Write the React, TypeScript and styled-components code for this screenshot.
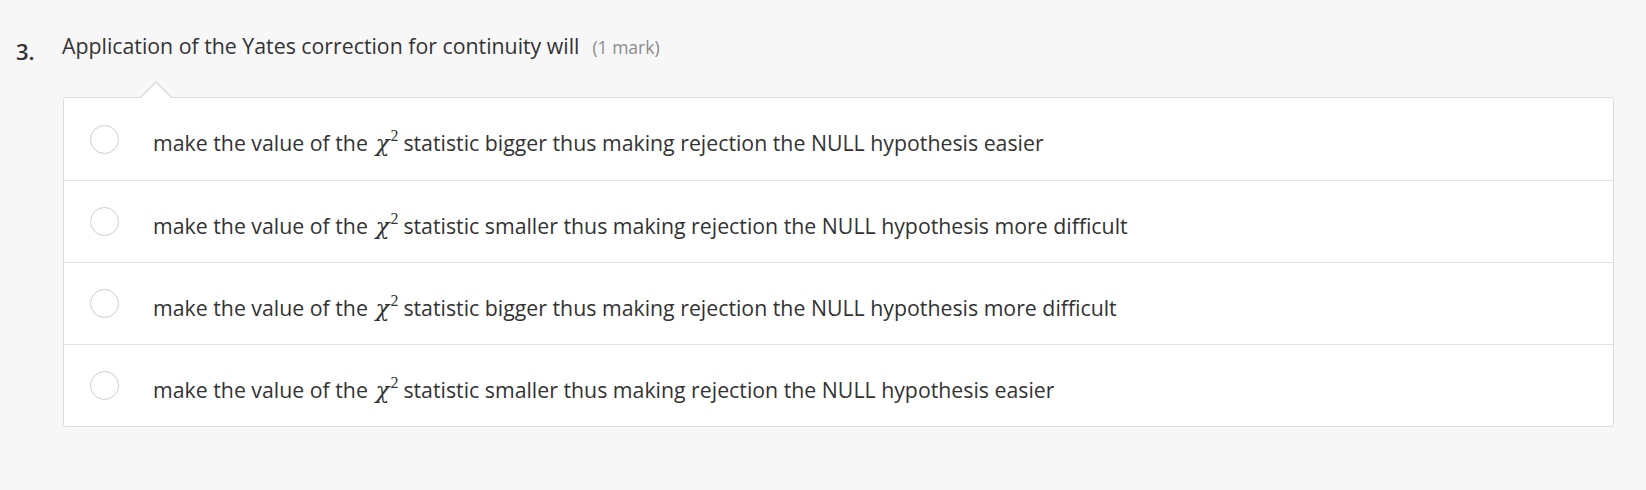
import React from "react";
import styled, { createGlobalStyle } from "styled-components";

const Global = createGlobalStyle`
  html, body { margin: 0; padding: 0; background: #f7f7f7; }
  body { font-family: "Open Sans", "Noto Sans", sans-serif; color: #333; }
`;

const Page = styled.div`
  width: 1646px;
  height: 490px;
  box-sizing: border-box;
  padding: 31px 32px 0 16px;
  background: #f7f7f7;
`;

const Header = styled.div`
  display: flex;
  align-items: flex-start;
  height: 66px;
`;

const Number = styled.div`
  width: 46px;
  flex: none;
  padding-top: 5px;
  font-size: 22px;
  line-height: 30px;
  font-weight: 600;
  color: #333;
`;

const Title = styled.div`
  font-size: 21.3px;
  line-height: 30px;
  color: #333;
`;

const Mark = styled.span`
  font-size: 17.5px;
  color: #8a8a8a;
  margin-left: 13px;
`;

const Box = styled.div`
  position: relative;
  margin-left: 47px;
  background: #fff;
  border: 1px solid #dcdcdc;
  border-radius: 3px;

  &::before, &::after {
    content: "";
    position: absolute;
    width: 0;
    height: 0;
    border-style: solid;
  }
  &::before {
    top: -17px;
    left: 76px;
    border-width: 0 16px 16px 16px;
    border-color: transparent transparent #dcdcdc transparent;
  }
  &::after {
    top: -15px;
    left: 77px;
    border-width: 0 15px 15px 15px;
    border-color: transparent transparent #fff transparent;
  }
`;

const Row = styled.label<{ $first?: boolean }>`
  display: flex;
  align-items: center;
  height: 82px;
  padding-left: 26px;
  border-top: ${(p) => (p.$first ? "none" : "1px solid #e2e2e2")};
  box-sizing: border-box;
`;

const Radio = styled.span`
  width: 29px;
  height: 29px;
  box-sizing: border-box;
  border: 1.5px solid #cfcfcf;
  border-radius: 50%;
  background: #fff;
  flex: none;
  margin-right: 34px;
`;

const Text = styled.span`
  padding-top: 7px;
  font-size: 21.3px;
  color: #333;
`;

const Chi = styled.span`
  font-family: "DejaVu Serif", "Liberation Serif", serif;
  font-style: italic;
  font-size: 23px;
  margin-left: 2px;
`;

const Sup = styled.sup`
  font-family: "Liberation Serif", serif;
  font-size: 16px;
  line-height: 0;
  vertical-align: 10px;
  margin-left: 1px;
  margin-right: 5px;
`;

const options = [
  ["bigger", "easier"],
  ["smaller", "more difficult"],
  ["bigger", "more difficult"],
  ["smaller", "easier"],
];

export default function App() {
  return (
    <Page>
      <Global />
      <Header>
        <Number>3.</Number>
        <Title>
          Application of the Yates correction for continuity will<Mark>(1 mark)</Mark>
        </Title>
      </Header>
      <Box>
        {options.map(([a, b], i) => (
          <Row key={i} $first={i === 0}>
            <Radio />
            <Text>
              make the value of the <Chi>χ</Chi>
              <Sup>2</Sup>statistic {a} thus making rejection the NULL hypothesis {b}
            </Text>
          </Row>
        ))}
      </Box>
    </Page>
  );
}
